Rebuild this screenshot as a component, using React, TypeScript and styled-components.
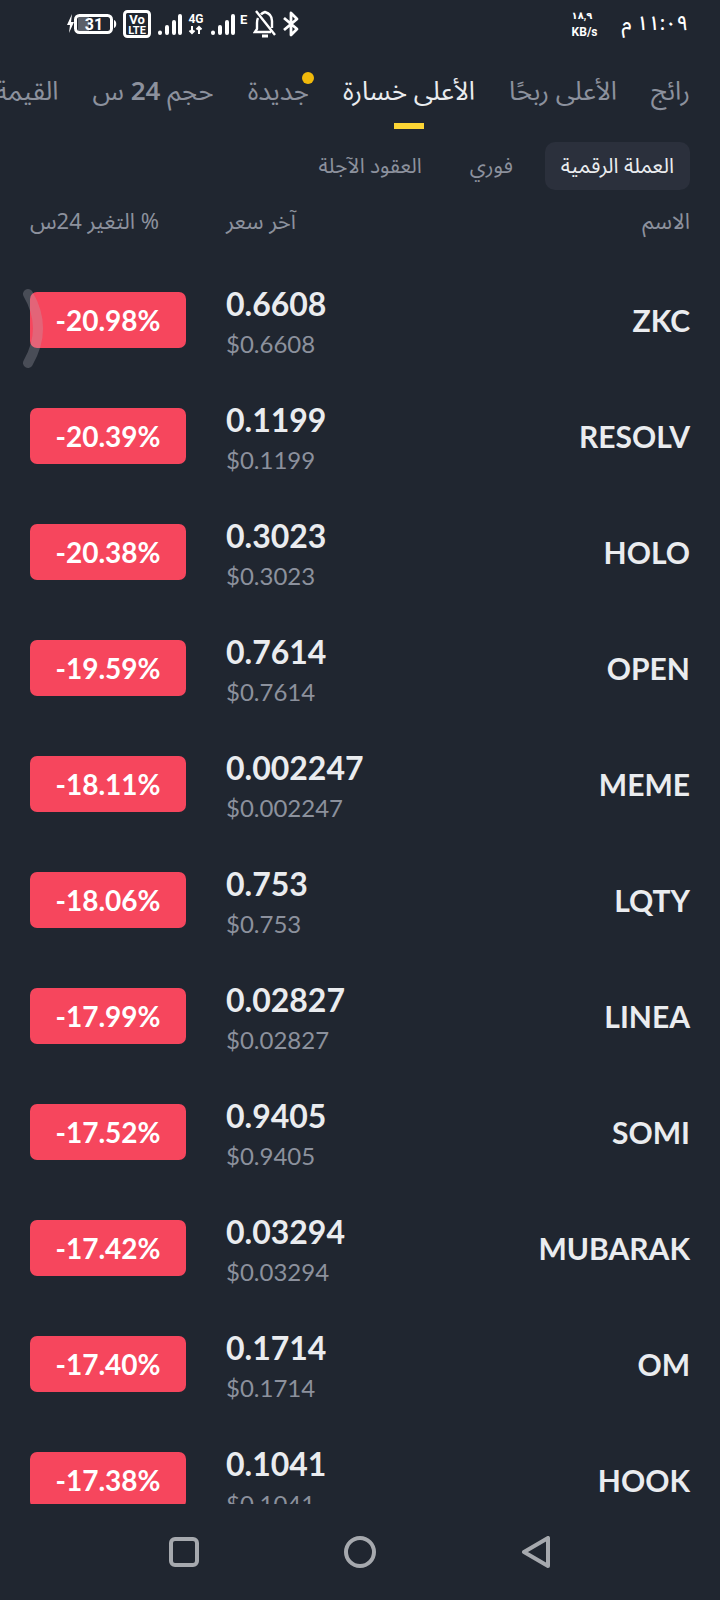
import React from "react";
import styled, { createGlobalStyle } from "styled-components";

const color = {
  bg: "#202630",
  text: "#eaecef",
  muted: "#8c919d",
  chip: "#2b303c",
  red: "#f6465d",
  yellow: "#fcd535",
  dot: "#f0b90b",
  nav: "#a6a9ae",
};

const arabicFont = `"Noto Sans Arabic", "Noto Sans", "DejaVu Sans", sans-serif`;
const numberFont = `Lato, "Noto Sans", sans-serif`;

const GlobalStyle = createGlobalStyle`
  *, *::before, *::after { box-sizing: border-box; }
  body { margin: 0; background: ${color.bg}; }
  button { font: inherit; color: inherit; background: none; border: 0; padding: 0; cursor: pointer; }
`;

const Screen = styled.div`
  display: flex;
  flex-direction: column;
  height: 100vh;
  overflow: hidden;
  background: ${color.bg};
  color: ${color.text};
  font-family: ${arabicFont};
`;

const StatusBar = styled.header`
  display: flex;
  align-items: center;
  justify-content: space-between;
  flex: none;
  height: 48px;
  padding: 0 32px 0 67px;
  color: #fff;
`;

const StatusIcons = styled.div`
  display: flex;
  align-items: center;
  gap: 5px;
`;

const StatusInfo = styled.div`
  display: flex;
  align-items: center;
  gap: 24px;
`;

const NetSpeed = styled.div`
  display: flex;
  flex-direction: column;
  font: 700 12px/16px Roboto, "DejaVu Sans", sans-serif;
`;

const NetAmount = styled.span`
  font-size: 10px;
`;

const Clock = styled.time`
  font-size: 20px;
  font-weight: 500;
  line-height: 32px;
`;

const Tabs = styled.nav`
  display: flex;
  flex: none;
  gap: 34px;
  height: 84px;
  padding: 0 30px;
  overflow: hidden;
`;

const Tab = styled.button<{ $active?: boolean }>`
  position: relative;
  flex: none;
  height: 82px;
  padding-top: 6px;
  font-size: 26px;
  line-height: 40px;
  white-space: nowrap;
  color: ${(p) => (p.$active ? color.text : color.muted)};

  &::after {
    content: "";
    position: absolute;
    left: 50%;
    bottom: 1px;
    width: 30px;
    height: 6px;
    margin-left: -15px;
    background: ${(p) => (p.$active ? color.yellow : "transparent")};
  }
`;

const TabNumber = styled.b`
  font-weight: 600;
`;

const NewDot = styled.span`
  position: absolute;
  top: 24px;
  right: -5px;
  width: 12px;
  height: 12px;
  border-radius: 50%;
  background: ${color.dot};
`;

const Chips = styled.div`
  display: flex;
  flex: none;
  gap: 16px;
  padding: 10px 30px 0;
`;

const Chip = styled.button<{ $active?: boolean }>`
  height: 48px;
  padding: 0 16px;
  border-radius: 10px;
  font-size: 21px;
  line-height: 32px;
  white-space: nowrap;
  color: ${(p) => (p.$active ? color.text : color.muted)};
  background: ${(p) => (p.$active ? color.chip : "transparent")};
`;

const Market = styled.main`
  position: relative;
  flex: 1;
  min-height: 0;
  padding: 0 30px;
  overflow: hidden;
`;

const CoinTable = styled.table`
  width: 100%;
  border-collapse: collapse;
  table-layout: fixed;
`;

const HeadCell = styled.th<{ $width?: string; $end?: boolean }>`
  width: ${(p) => p.$width ?? "auto"};
  height: 72px;
  padding: 0 0 8px;
  font-size: 22px;
  line-height: 32px;
  font-weight: 400;
  text-align: ${(p) => (p.$end ? "left" : "right")};
  color: ${color.muted};
`;

const Name = styled.th`
  height: 116px;
  padding: 0;
  font: 700 30px/40px ${numberFont};
  text-align: right;
  color: ${color.text};
`;

const PriceCell = styled.td`
  padding: 8px 0 0;
  direction: ltr;
  text-align: left;
  font-family: ${numberFont};
`;

const Price = styled.div`
  font-size: 32px;
  line-height: 40px;
  font-weight: 700;
`;

const FiatPrice = styled.div`
  font-size: 24px;
  line-height: 40px;
  color: ${color.muted};
`;

const ChangeCell = styled.td`
  padding: 0;
  direction: ltr;
`;

const ChangeBadge = styled.div`
  width: 156px;
  border-radius: 7px;
  font: 700 28px/56px ${numberFont};
  text-align: center;
  color: #fff;
  background: ${color.red};
`;

const SwipeHint = styled.svg`
  position: absolute;
  left: 22px;
  top: 98px;
`;

const NavBar = styled.footer`
  display: flex;
  align-items: center;
  justify-content: space-between;
  flex: none;
  height: 96px;
  padding: 0 160px;
`;

const NavButton = styled.button`
  display: flex;
  align-items: center;
  justify-content: center;
  width: 48px;
  height: 48px;
`;

const Signal = () => (
  <svg width="26" height="22" viewBox="0 0 26 22" fill="none" stroke="#fff" strokeWidth="4" strokeLinecap="round">
    <path d="M4 19.500v.5M11 14v6M18 9v11M24 3v17" />
  </svg>
);

const BatteryIcon = () => (
  <svg width="51" height="22" viewBox="0 0 51 22">
    <path d="M5 1 0 12h3l-1 8 5-11H4z" fill="#fff" />
    <rect x="11" y="4" width="11" height="14" fill="#5b6069" />
    <rect x="8.500" y="2.500" width="36" height="17" rx="4" fill="none" stroke="#fff" strokeWidth="3" />
    <path d="M47 7c3 1 3 7 0 8z" fill="#fff" />
    <text x="27" y="17" textAnchor="middle" fontFamily="Roboto, sans-serif" fontWeight="700" fontSize="16" fill="#fff">31</text>
  </svg>
);

const VolteIcon = () => (
  <svg width="28" height="28" viewBox="0 0 28 28" fill="#fff" fontFamily="Roboto, sans-serif" fontWeight="700">
    <rect x="1.500" y="1.500" width="25" height="25" rx="3" fill="none" stroke="#fff" strokeWidth="3" />
    <text x="14" y="14" textAnchor="middle" fontSize="13">Vo</text>
    <text x="14" y="24" textAnchor="middle" fontSize="11">LTE</text>
  </svg>
);

const NetworkIcon = () => (
  <svg width="17" height="22" viewBox="0 0 17 22" fill="none" stroke="#fff" strokeWidth="2">
    <text x="9" y="10" textAnchor="middle" fontFamily="Roboto, sans-serif" fontWeight="700" fontSize="12" fill="#fff" stroke="none">4G</text>
    <path d="M5 13v7M2.500 17.500 5 20l2.500-2.500M12 21v-7M9.500 16.500 12 14l2.500 2.500" strokeWidth="2" />
  </svg>
);

const EdgeIcon = () => (
  <svg width="8" height="22" viewBox="0 0 8 22">
    <text x="0" y="11" fontFamily="Roboto, sans-serif" fontWeight="700" fontSize="13" fill="#fff">E</text>
  </svg>
);

const MutedBellIcon = () => (
  <svg width="24" height="28" viewBox="0 0 24 28" fill="none" stroke="#fff" strokeWidth="2.400">
    <path d="M8 4.500Q9 3 12 2q7 2 7 9v7M5 8q-1 2-1 5v6l-2 3h16M3 1l19 24" />
    <path d="M9 26h6" strokeWidth="3" />
  </svg>
);

const BluetoothIcon = () => (
  <svg width="18" height="26" viewBox="0 0 18 26" fill="none" stroke="#fff" strokeWidth="2.800" strokeLinejoin="round">
    <path d="M2 7l13 11-6 6V2l6 6L2 19" />
  </svg>
);

const coins = [
  ["ZKC", "0.6608", "20.98"],
  ["RESOLV", "0.1199", "20.39"],
  ["HOLO", "0.3023", "20.38"],
  ["OPEN", "0.7614", "19.59"],
  ["MEME", "0.002247", "18.11"],
  ["LQTY", "0.753", "18.06"],
  ["LINEA", "0.02827", "17.99"],
  ["SOMI", "0.9405", "17.52"],
  ["MUBARAK", "0.03294", "17.42"],
  ["OM", "0.1714", "17.40"],
  ["HOOK", "0.1041", "17.38"],
];

export default function App() {
  return (
    <Screen lang="ar">
      <GlobalStyle />
      <StatusBar>
        <StatusIcons>
          <BatteryIcon />
          <VolteIcon />
          <Signal />
          <NetworkIcon />
          <Signal />
          <EdgeIcon />
          <MutedBellIcon />
          <BluetoothIcon />
        </StatusIcons>
        <StatusInfo>
          <NetSpeed>
            <NetAmount>١٨,٩</NetAmount>
            <span>KB/s</span>
          </NetSpeed>
          <Clock dir="rtl">١١:٠٩ م</Clock>
        </StatusInfo>
      </StatusBar>

      <Tabs dir="rtl">
        <Tab>رائج</Tab>
        <Tab>الأعلى ربحًا</Tab>
        <Tab $active aria-current="page">الأعلى خسارة</Tab>
        <Tab>جديدة<NewDot /></Tab>
        <Tab>حجم <TabNumber>24</TabNumber> س</Tab>
        <Tab>القيمة</Tab>
      </Tabs>

      <Chips dir="rtl">
        <Chip $active aria-pressed="true">العملة الرقمية</Chip>
        <Chip>فوري</Chip>
        <Chip>العقود الآجلة</Chip>
      </Chips>

      <Market>
        <CoinTable dir="rtl">
          <thead>
            <tr>
              <HeadCell scope="col">الاسم</HeadCell>
              <HeadCell scope="col" $width="40%" $end>آخر سعر</HeadCell>
              <HeadCell scope="col" $width="196px" $end>% التغير 24س</HeadCell>
            </tr>
          </thead>
          <tbody>
            {coins.map(([name, price, change]) => (
              <tr key={name}>
                <Name scope="row">{name}</Name>
                <PriceCell>
                  <Price>{price}</Price>
                  <FiatPrice>${price}</FiatPrice>
                </PriceCell>
                <ChangeCell>
                  <ChangeBadge>-{change}%</ChangeBadge>
                </ChangeCell>
              </tr>
            ))}
          </tbody>
        </CoinTable>
        <SwipeHint width="22" height="82" viewBox="0 0 22 82" fill="none" aria-hidden="true">
          <path d="M6 6Q26 40 6 75" stroke="#b4b4be" strokeOpacity="0.280" strokeWidth="10" strokeLinecap="round" />
        </SwipeHint>
      </Market>

      <NavBar>
        <NavButton aria-label="التطبيقات الأخيرة">
          <svg width="30" height="30" viewBox="0 0 30 30" fill="none" stroke={color.nav} strokeWidth="4">
            <rect x="2" y="2" width="26" height="26" rx="4" />
          </svg>
        </NavButton>
        <NavButton aria-label="الرئيسية">
          <svg width="32" height="32" viewBox="0 0 32 32" fill="none" stroke={color.nav} strokeWidth="4">
            <circle cx="16" cy="16" r="14" />
          </svg>
        </NavButton>
        <NavButton aria-label="رجوع">
          <svg width="30" height="32" viewBox="0 0 30 32" fill="none" stroke={color.nav} strokeWidth="4" strokeLinejoin="round">
            <path d="M27 2v28L3 16z" />
          </svg>
        </NavButton>
      </NavBar>
    </Screen>
  );
}
